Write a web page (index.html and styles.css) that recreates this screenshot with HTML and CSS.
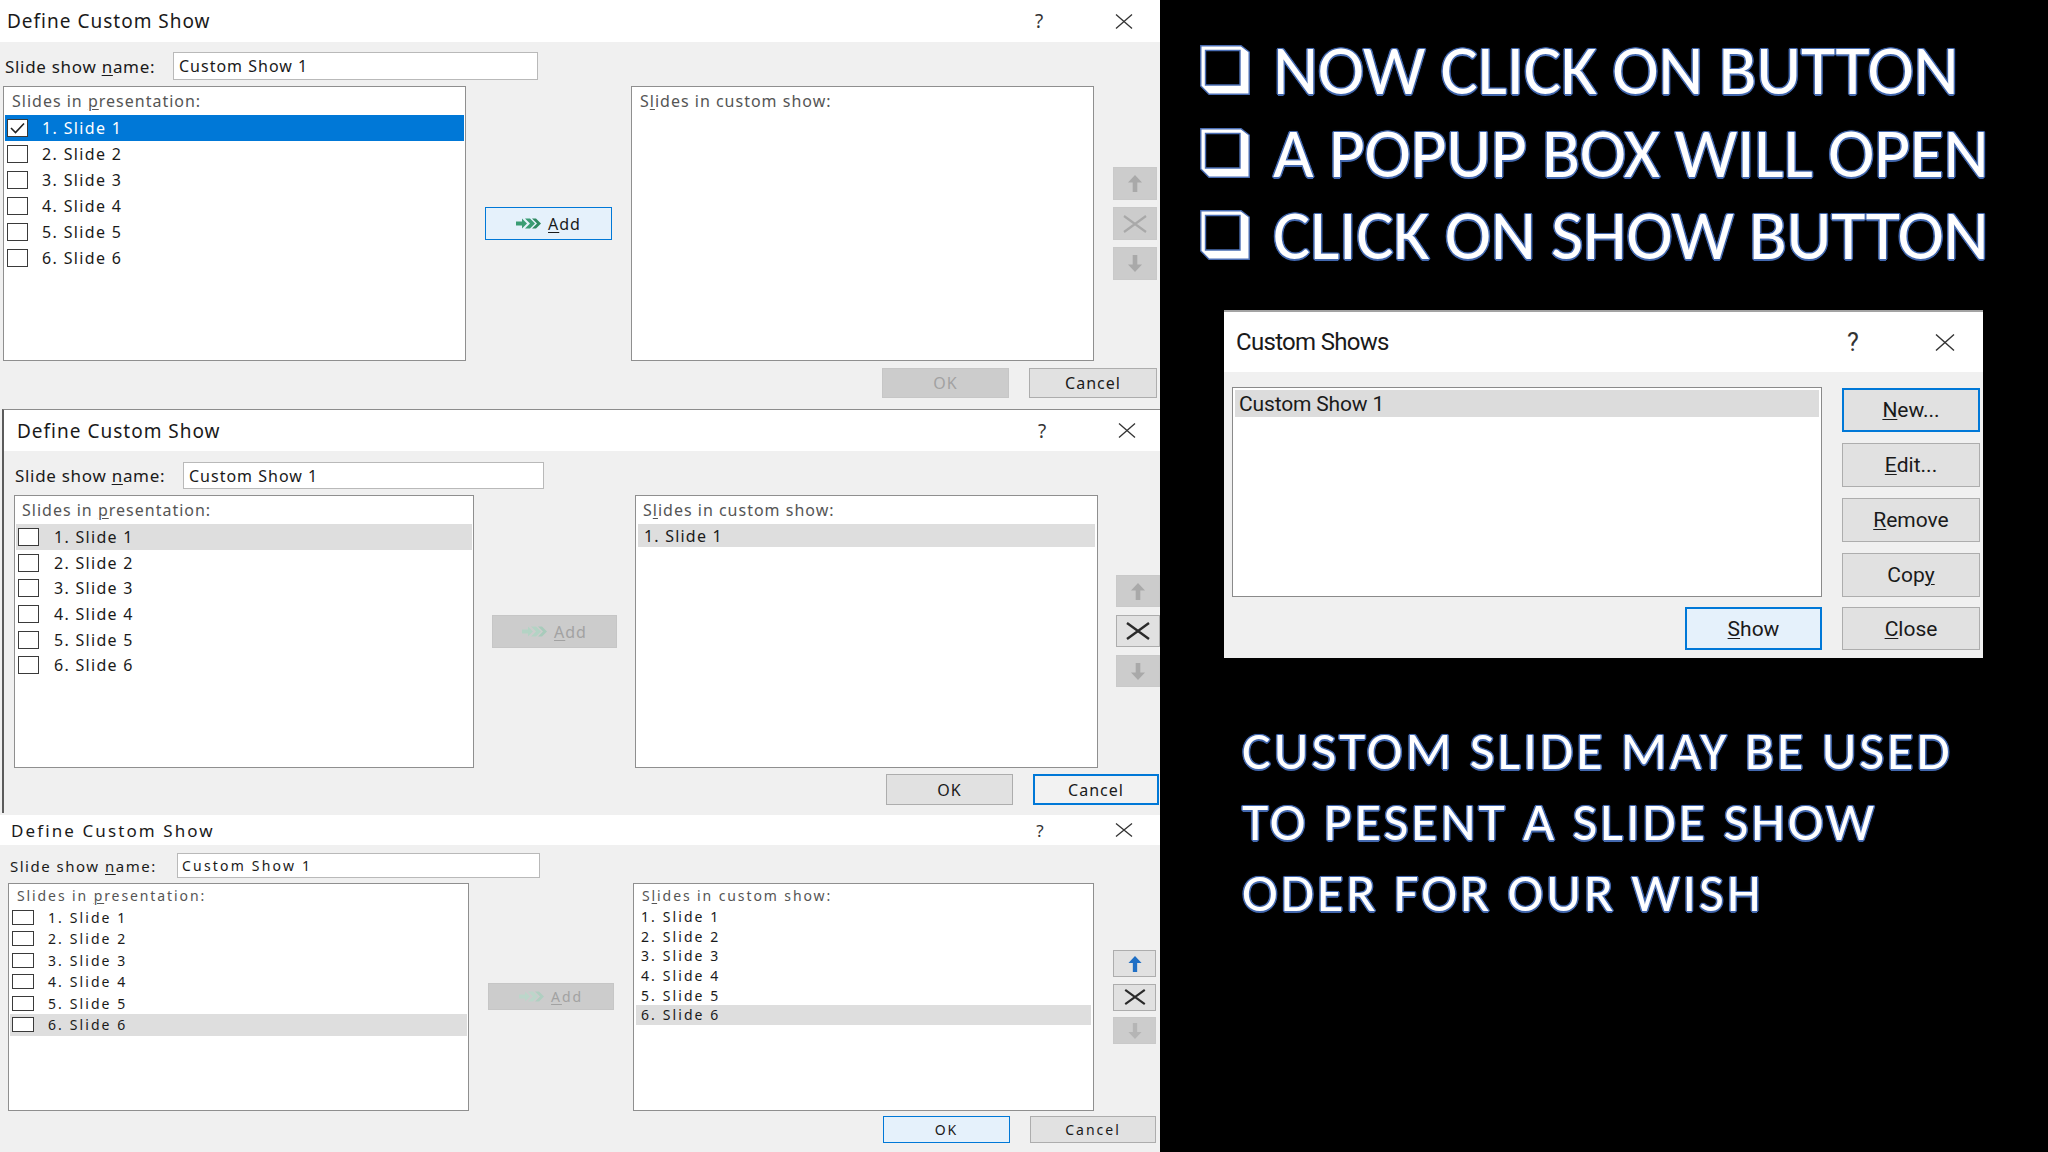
FILE: index.html
```html
<!DOCTYPE html>
<html>
<head>
<meta charset="utf-8">
<title>Custom Shows</title>
<link rel="stylesheet" href="styles.css">
</head>
<body>
<div class="screen">
  <div class="stack">

    <!-- Dialog 1 -->
    <section class="dlg d1">
      <header class="tbar">
        <span class="ttl">Define Custom Show</span>
        <span class="help">?</span>
        <span class="xbtn"><svg width="18" height="15" viewBox="0 0 18 15"><path d="M1 0.5 L17 14.5 M17 0.5 L1 14.5" stroke="#333" stroke-width="1.3" fill="none"/></svg></span>
      </header>
      <div class="namerow">
        <span class="lbl">Slide show <u>n</u>ame:</span>
        <div class="input">Custom Show 1</div>
      </div>
      <div class="mid">
        <div class="list">
          <div class="lhead"><span>Slides in <u>p</u>resentation:</span></div>
          <div class="row sel"><span class="cb"><svg width="19" height="16" viewBox="0 0 19 16"><path d="M3 8 L7.5 12.5 L16 3.5" stroke="#222" stroke-width="1.6" fill="none"/></svg></span><span>1. Slide 1</span></div>
          <div class="row"><span class="cb"></span><span>2. Slide 2</span></div>
          <div class="row"><span class="cb"></span><span>3. Slide 3</span></div>
          <div class="row"><span class="cb"></span><span>4. Slide 4</span></div>
          <div class="row"><span class="cb"></span><span>5. Slide 5</span></div>
          <div class="row"><span class="cb"></span><span>6. Slide 6</span></div>
        </div>
        <div class="addcol">
          <button class="btn add def"><svg class="addico" width="26" height="11" viewBox="0 0 26 11"><path d="M0 3.5 H6 V0.5 L11 5.5 L6 10.5 V7.5 H0 Z" fill="#3a9d74"/><path d="M9 0.5 H14 L19 5.5 L14 10.5 H9 L14 5.5 Z" fill="#3a9d74"/><path d="M16 0.5 H20 L25 5.5 L20 10.5 H16 L21 5.5 Z" fill="#2f8a62"/></svg><span><u>A</u>dd</span></button>
        </div>
        <div class="list">
          <div class="lhead"><span>S<u>l</u>ides in custom show:</span></div>
        </div>
        <div class="side">
          <button class="sbtn dis"><svg width="14" height="17" viewBox="0 0 14 17"><path d="M7 0 L14 7.5 H9.3 V17 H4.7 V7.5 H0 Z" fill="#a9a9a9"/></svg></button>
          <button class="sbtn dis"><svg width="24" height="18" viewBox="0 0 24 18"><path d="M1 1 L23 17 M23 1 L1 17" stroke="#a9a9a9" stroke-width="2.2" fill="none"/></svg></button>
          <button class="sbtn dis"><svg width="14" height="17" viewBox="0 0 14 17"><path d="M7 17 L14 9.5 H9.3 V0 H4.7 V9.5 H0 Z" fill="#a9a9a9"/></svg></button>
        </div>
      </div>
      <div class="foot">
        <button class="btn dis okb">OK</button>
        <button class="btn cnb">Cancel</button>
      </div>
    </section>

    <!-- Dialog 2 -->
    <section class="dlg d2">
      <header class="tbar">
        <span class="ttl">Define Custom Show</span>
        <span class="help">?</span>
        <span class="xbtn"><svg width="18" height="15" viewBox="0 0 18 15"><path d="M1 0.5 L17 14.5 M17 0.5 L1 14.5" stroke="#333" stroke-width="1.3" fill="none"/></svg></span>
      </header>
      <div class="namerow">
        <span class="lbl">Slide show <u>n</u>ame:</span>
        <div class="input">Custom Show 1</div>
      </div>
      <div class="mid">
        <div class="list">
          <div class="lhead"><span>Slides in <u>p</u>resentation:</span></div>
          <div class="row hl"><span class="cb"></span><span>1. Slide 1</span></div>
          <div class="row"><span class="cb"></span><span>2. Slide 2</span></div>
          <div class="row"><span class="cb"></span><span>3. Slide 3</span></div>
          <div class="row"><span class="cb"></span><span>4. Slide 4</span></div>
          <div class="row"><span class="cb"></span><span>5. Slide 5</span></div>
          <div class="row"><span class="cb"></span><span>6. Slide 6</span></div>
        </div>
        <div class="addcol">
          <button class="btn add dis"><svg class="addico" width="26" height="11" viewBox="0 0 26 11"><path d="M0 3.5 H6 V0.5 L11 5.5 L6 10.5 V7.5 H0 Z" fill="#b3d3c4"/><path d="M9 0.5 H14 L19 5.5 L14 10.5 H9 L14 5.5 Z" fill="#b3d3c4"/><path d="M16 0.5 H20 L25 5.5 L20 10.5 H16 L21 5.5 Z" fill="#a8cbbb"/></svg><span><u>A</u>dd</span></button>
        </div>
        <div class="list">
          <div class="lhead"><span>S<u>l</u>ides in custom show:</span></div>
          <div class="item hl">1. Slide 1</div>
        </div>
        <div class="side">
          <button class="sbtn dis"><svg width="14" height="17" viewBox="0 0 14 17"><path d="M7 0 L14 7.5 H9.3 V17 H4.7 V7.5 H0 Z" fill="#a9a9a9"/></svg></button>
          <button class="sbtn"><svg width="24" height="18" viewBox="0 0 24 18"><path d="M1 1 L23 17 M23 1 L1 17" stroke="#2a2a2a" stroke-width="2.4" fill="none"/></svg></button>
          <button class="sbtn dis"><svg width="14" height="17" viewBox="0 0 14 17"><path d="M7 17 L14 9.5 H9.3 V0 H4.7 V9.5 H0 Z" fill="#a9a9a9"/></svg></button>
        </div>
      </div>
      <div class="foot">
        <button class="btn okb">OK</button>
        <button class="btn cnb focus2">Cancel</button>
      </div>
    </section>

    <!-- Dialog 3 -->
    <section class="dlg d3">
      <header class="tbar">
        <span class="ttl">Define Custom Show</span>
        <span class="help">?</span>
        <span class="xbtn"><svg width="18" height="14" viewBox="0 0 18 14"><path d="M1 0.5 L17 13.5 M17 0.5 L1 13.5" stroke="#333" stroke-width="1.3" fill="none"/></svg></span>
      </header>
      <div class="namerow">
        <span class="lbl">Slide show <u>n</u>ame:</span>
        <div class="input">Custom Show 1</div>
      </div>
      <div class="mid">
        <div class="list">
          <div class="lhead"><span>Slides in <u>p</u>resentation:</span></div>
          <div class="row"><span class="cb"></span><span>1. Slide 1</span></div>
          <div class="row"><span class="cb"></span><span>2. Slide 2</span></div>
          <div class="row"><span class="cb"></span><span>3. Slide 3</span></div>
          <div class="row"><span class="cb"></span><span>4. Slide 4</span></div>
          <div class="row"><span class="cb"></span><span>5. Slide 5</span></div>
          <div class="row hl"><span class="cb"></span><span>6. Slide 6</span></div>
        </div>
        <div class="addcol">
          <button class="btn add dis"><svg class="addico" width="26" height="11" viewBox="0 0 26 11"><path d="M0 3.5 H6 V0.5 L11 5.5 L6 10.5 V7.5 H0 Z" fill="#bcd6ca"/><path d="M9 0.5 H14 L19 5.5 L14 10.5 H9 L14 5.5 Z" fill="#bcd6ca"/><path d="M16 0.5 H20 L25 5.5 L20 10.5 H16 L21 5.5 Z" fill="#b0cfc1"/></svg><span><u>A</u>dd</span></button>
        </div>
        <div class="list">
          <div class="lhead"><span>S<u>l</u>ides in custom show:</span></div>
          <div class="item">1. Slide 1</div>
          <div class="item">2. Slide 2</div>
          <div class="item">3. Slide 3</div>
          <div class="item">4. Slide 4</div>
          <div class="item">5. Slide 5</div>
          <div class="item hl">6. Slide 6</div>
        </div>
        <div class="side">
          <button class="sbtn"><svg width="14" height="16" viewBox="0 0 14 17"><path d="M7 0 L14 7.5 H9.3 V17 H4.7 V7.5 H0 Z" fill="#1f6fc5"/></svg></button>
          <button class="sbtn"><svg width="24" height="16" viewBox="0 0 24 18"><path d="M1 1 L23 17 M23 1 L1 17" stroke="#2a2a2a" stroke-width="2.4" fill="none"/></svg></button>
          <button class="sbtn dis"><svg width="14" height="16" viewBox="0 0 14 17"><path d="M7 17 L14 9.5 H9.3 V0 H4.7 V9.5 H0 Z" fill="#b5b5b5"/></svg></button>
        </div>
      </div>
      <div class="foot">
        <button class="btn okb def">OK</button>
        <button class="btn cnb">Cancel</button>
      </div>
    </section>
  </div>

  <div class="panel">
    <div class="bullets">
      <div class="bl"><svg class="bglyph" width="50" height="50" viewBox="0 0 50 50"><path d="M0.8 0.8 H41 L49.2 7 V49.2 H9 L0.8 41 Z M5.5 5.5 V40 H40 V5.5 Z" fill="#fff" fill-rule="evenodd" stroke="#4a6db3" stroke-width="1.4"/></svg><span class="btxt">NOW CLICK ON BUTTON</span></div>
      <div class="bl"><svg class="bglyph" width="50" height="50" viewBox="0 0 50 50"><path d="M0.8 0.8 H41 L49.2 7 V49.2 H9 L0.8 41 Z M5.5 5.5 V40 H40 V5.5 Z" fill="#fff" fill-rule="evenodd" stroke="#4a6db3" stroke-width="1.4"/></svg><span class="btxt">A POPUP BOX WILL OPEN</span></div>
      <div class="bl"><svg class="bglyph" width="50" height="50" viewBox="0 0 50 50"><path d="M0.8 0.8 H41 L49.2 7 V49.2 H9 L0.8 41 Z M5.5 5.5 V40 H40 V5.5 Z" fill="#fff" fill-rule="evenodd" stroke="#4a6db3" stroke-width="1.4"/></svg><span class="btxt">CLICK ON SHOW BUTTON</span></div>
    </div>

    <section class="cs">
      <header class="cs-tbar">
        <span class="cs-ttl">Custom Shows</span>
        <span class="cs-help">?</span>
        <span class="cs-x"><svg width="20" height="17" viewBox="0 0 20 17"><path d="M1 0.5 L19 16.5 M19 0.5 L1 16.5" stroke="#333" stroke-width="1.4" fill="none"/></svg></span>
      </header>
      <div class="cs-body">
        <div class="cs-list">
          <div class="cs-item">Custom Show 1</div>
        </div>
        <div class="cs-btns">
          <button class="cbtn focus2"><u>N</u>ew...</button>
          <button class="cbtn"><u>E</u>dit...</button>
          <button class="cbtn"><u>R</u>emove</button>
          <button class="cbtn">Cop<u>y</u></button>
        </div>
        <button class="cbtn show"><u>S</u>how</button>
        <button class="cbtn last"><u>C</u>lose</button>
      </div>
    </section>

    <div class="note">
      <div class="nline">CUSTOM SLIDE MAY BE USED</div>
      <div class="nline">TO PESENT A SLIDE SHOW</div>
      <div class="nline">ODER FOR OUR WISH</div>
    </div>
  </div>
</div>
</body>
</html>
```

FILE: styles.css
```css
* { box-sizing: border-box; }
html, body { margin: 0; padding: 0; }
body {
  width: 2048px;
  height: 1152px;
  overflow: hidden;
  background: #000;
  font-family: "Noto Sans", "Open Sans", sans-serif;
}
u { text-underline-offset: 2px; text-decoration-thickness: 1px; }

.screen { display: flex; width: 2048px; height: 1152px; }
.stack {
  width: 1160px;
  flex: none;
  display: flex;
  flex-direction: column;
  background: #f0f0f0;
}
.panel {
  flex: 1;
  background: #000;
  display: flex;
  flex-direction: column;
  padding-top: 29px;
}

/* ---------- Define Custom Show dialogs ---------- */
.dlg {
  display: flex;
  flex-direction: column;
  background: #f0f0f0;
  color: #1a1a1a;
  flex: none;
}
.tbar { display: flex; align-items: center; background: #fff; flex: none; }
.ttl { flex: 1; color: #1a1a1a; }
.help { width: 30px; text-align: center; color: #333; }
.xbtn { width: 30px; display: flex; justify-content: center; align-items: center; }
.namerow { display: flex; align-items: center; flex: none; }
.lbl { flex: none; color: #1a1a1a; }
.input {
  background: #fff;
  border: 1px solid #b9b9b9;
  display: flex;
  align-items: center;
  height: 100%;
}
.mid { display: grid; flex: none; }
.list {
  background: #fff;
  border: 1px solid #8f8f8f;
  display: flex;
  flex-direction: column;
  overflow: hidden;
}
.lhead { color: #555; display: flex; align-items: center; flex: none; white-space: pre; }
.row { display: flex; align-items: center; flex: none; }
.row.sel { background: #0078d7; color: #fff; }
.hl { background: #dedede; }
.item { display: flex; align-items: center; flex: none; }
.cb {
  background: #fff;
  border: 1px solid #3a3a3a;
  flex: none;
  display: flex;
  align-items: center;
  justify-content: center;
}
.btn {
  font: inherit;
  letter-spacing: inherit;
  border: 1px solid #adadad;
  background: #e1e1e1;
  color: #1a1a1a;
  display: flex;
  align-items: center;
  justify-content: center;
  padding: 0;
  margin: 0;
}
.btn.dis { background: #cccccc; border-color: #c6c6c6; color: #a2a2a2; }
.btn.def { border: 1px solid #0078d7; background: #e5f1fb; }
.btn.focus2 { border: 2px solid #0078d7; background: #f2f2f2; }
.add { width: 100%; gap: 6px; }
.addico { flex: none; }
.side { display: flex; flex-direction: column; }
.sbtn {
  border: 1px solid #adadad;
  background: #e1e1e1;
  padding: 0;
  margin: 0;
  display: flex;
  align-items: center;
  justify-content: center;
  width: 100%;
}
.sbtn.dis { background: #cccccc; border-color: #c9c9c9; }
.foot { display: flex; justify-content: flex-end; flex: none; }

/* dialog 1 */
.d1 { height: 409px; }
.d1 .tbar { height: 42px; padding-left: 7px; padding-right: 21px; }
.d1 .ttl { font-size: 19px; letter-spacing: 1px; }
.d1 .help { font-size: 19px; margin-right: 55px; }
.d1 .namerow { margin-top: 10px; height: 28px; padding-left: 5px; }
.d1 .lbl { width: 168px; font-size: 17px; letter-spacing: 0.7px; }
.d1 .input { width: 365px; padding-left: 5px; font-size: 16px; letter-spacing: 1px; }
.d1 .mid {
  margin-top: 6px;
  height: 275px;
  padding-left: 3px;
  grid-template-columns: 463px 127px 463px 44px;
  column-gap: 19px;
  font-size: 16px;
  letter-spacing: 1px;
}
.d1 .lhead { height: 28px; padding-left: 8px; }
.d1 .row { height: 26px; margin: 0 1px; padding-left: 2px; gap: 14px; letter-spacing: 1.35px; }
.d1 .cb { width: 21px; height: 18px; }
.d1 .add { margin-top: 121px; height: 33px; }
.d1 .side { padding-top: 81px; gap: 7px; }
.d1 .sbtn { height: 33px; }
.d1 .foot { margin-top: 7px; height: 30px; padding-right: 3px; gap: 20px; font-size: 16px; letter-spacing: 1px; }
.d1 .okb { width: 127px; }
.d1 .cnb { width: 128px; }

/* dialog 2 */
.d2 {
  height: 404px;
  margin-left: 2px;
  border-left: 2px solid #5b5b5b;
  border-top: 1px solid #8c8c8c;
}
.d2 .tbar { height: 41px; padding-left: 13px; padding-right: 18px; }
.d2 .ttl { font-size: 19px; letter-spacing: 1px; }
.d2 .help { font-size: 19px; margin-right: 55px; }
.d2 .namerow { margin-top: 11px; height: 27px; padding-left: 11px; }
.d2 .lbl { width: 168px; font-size: 17px; letter-spacing: 0.7px; }
.d2 .input { width: 361px; padding-left: 5px; font-size: 16px; letter-spacing: 1px; }
.d2 .mid {
  margin-top: 6px;
  height: 273px;
  padding-left: 10px;
  grid-template-columns: 460px 125px 463px 44px;
  column-gap: 18px;
  font-size: 16px;
  letter-spacing: 1px;
}
.d2 .lhead { height: 28px; padding-left: 7px; }
.d2 .row { height: 25.7px; margin: 0 1px; padding-left: 2px; gap: 15px; letter-spacing: 1.3px; }
.d2 .cb { width: 21px; height: 18px; }
.d2 .item { height: 23px; margin: 0 2px; padding-left: 6px; letter-spacing: 1.2px; }
.d2 .add { margin-top: 120px; height: 33px; }
.d2 .side { padding-top: 80px; gap: 8px; }
.d2 .sbtn { height: 32px; }
.d2 .foot { margin-top: 6px; height: 31px; padding-right: 1px; gap: 20px; font-size: 16px; letter-spacing: 1px; }
.d2 .okb { width: 127px; }
.d2 .cnb { width: 126px; }

/* dialog 3 */
.d3 { height: 339px; padding-top: 2px; }
.d3 .tbar { height: 30px; padding-left: 11px; padding-right: 21px; }
.d3 .ttl { font-size: 17px; letter-spacing: 2.1px; }
.d3 .help { font-size: 17px; margin-right: 54px; }
.d3 .namerow { margin-top: 8px; height: 25px; padding-left: 10px; }
.d3 .lbl { width: 167px; font-size: 15px; letter-spacing: 1.5px; }
.d3 .input { width: 363px; padding-left: 4px; font-size: 14px; letter-spacing: 2.2px; }
.d3 .mid {
  margin-top: 5px;
  height: 228px;
  padding-left: 8px;
  grid-template-columns: 461px 126px 461px 43px;
  column-gap: 19px;
  font-size: 14px;
  letter-spacing: 1.9px;
}
.d3 .lhead { height: 22.5px; padding-left: 8px; }
.d3 .row { height: 21.5px; margin: 0 1px; padding-left: 2px; gap: 14px; letter-spacing: 2.1px; }
.d3 .cb { width: 22px; height: 15px; }
.d3 .item { height: 19.7px; margin: 0 2px; padding-left: 5px; letter-spacing: 2.1px; }
.d3 .add { margin-top: 100px; height: 27px; }
.d3 .side { padding-top: 67px; gap: 6.5px; }
.d3 .sbtn { height: 27px; }
.d3 .foot { margin-top: 5px; height: 27px; padding-right: 4px; gap: 20px; font-size: 14px; letter-spacing: 2px; }
.d3 .okb { width: 127px; }
.d3 .cnb { width: 126px; }

/* ---------- Right black panel ---------- */
.bullets { display: flex; flex-direction: column; flex: none; }
.bl {
  display: flex;
  align-items: center;
  height: 82.5px;
  padding-left: 40px;
  gap: 23px;
}
.bglyph { flex: none; }
.btxt, .nline {
  font-family: Carlito, Calibri, Lato, sans-serif;
  color: #fff;
  white-space: nowrap;
  text-shadow:
    -1.5px 0 0 #4267ad, 1.5px 0 0 #4267ad, 0 -1.5px 0 #4267ad, 0 1.5px 0 #4267ad,
    -1px -1px 0 #4267ad, 1px 1px 0 #4267ad, -1px 1px 0 #4267ad, 1px -1px 0 #4267ad,
    0 0 3px #1d3b7a;
}
.btxt { font-size: 70px; line-height: 82.5px; letter-spacing: -0.35px; }

.cs {
  margin-left: 64px;
  margin-top: 33.5px;
  width: 759px;
  height: 348px;
  flex: none;
  background: #f0f0f0;
  border-top: 2px solid #a3a3a3;
  display: flex;
  flex-direction: column;
  font-family: Roboto, "Noto Sans", sans-serif;
  color: #1a1a1a;
}
.cs-tbar {
  height: 60px;
  flex: none;
  background: #fff;
  display: flex;
  align-items: center;
  padding-left: 12px;
  padding-right: 23px;
}
.cs-ttl { flex: 1; font-size: 24px; letter-spacing: -0.7px; }
.cs-help { width: 30px; text-align: center; font-size: 25px; color: #333; margin-right: 62px; }
.cs-x { width: 30px; display: flex; justify-content: center; }
.cs-body {
  display: grid;
  grid-template-columns: 590px 138px;
  grid-template-rows: 210px 43px;
  column-gap: 20px;
  row-gap: 10px;
  padding: 15px 3px 0 8px;
}
.cs-list { background: #fff; border: 1px solid #8a8a8a; display: flex; flex-direction: column; }
.cs-item {
  height: 27px;
  margin: 2px 2px 0;
  padding-left: 4px;
  background: #dcdcdc;
  display: flex;
  align-items: center;
  font-size: 21px;
  letter-spacing: -0.15px;
}
.cs-btns { display: flex; flex-direction: column; gap: 11px; padding-top: 1px; }
.cbtn {
  font-family: inherit;
  font-size: 21px;
  letter-spacing: 0;
  color: #1a1a1a;
  height: 44px;
  width: 138px;
  border: 1px solid #adadad;
  background: #e1e1e1;
  padding: 0;
  margin: 0;
  display: flex;
  align-items: center;
  justify-content: center;
}
.cbtn.focus2 { border: 2px solid #0078d7; }
.cbtn.show { justify-self: end; width: 137px; height: 43px; border: 2px solid #0078d7; background: #e5f1fb; }
.cbtn.last { height: 43px; }

.note { margin-left: 82px; margin-top: 57.6px; display: flex; flex-direction: column; }
.nline { font-size: 54px; line-height: 71px; letter-spacing: 3px; }
```
